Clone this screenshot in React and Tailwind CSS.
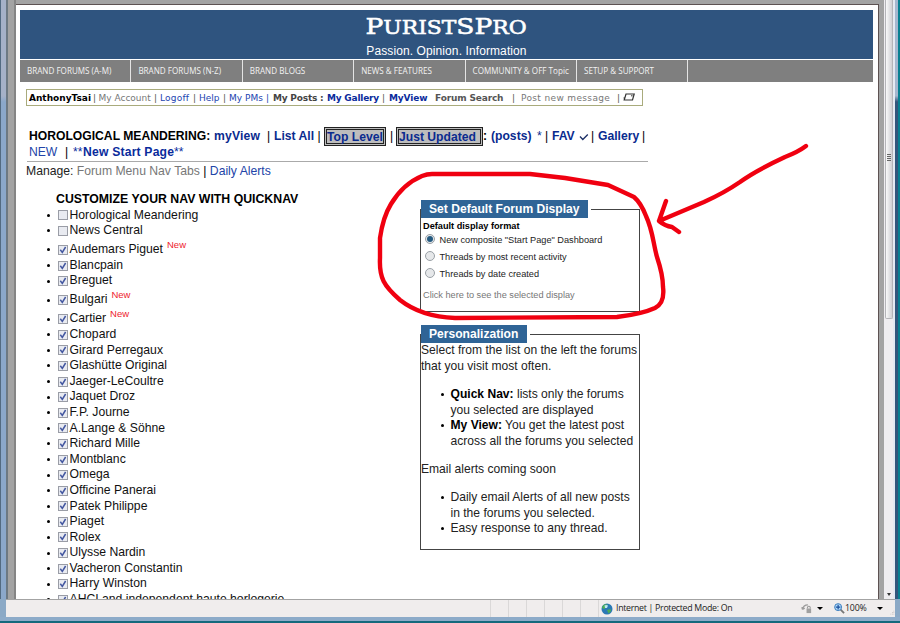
import React from "react";

const NAV = [
  "BRAND FORUMS (A-M)",
  "BRAND FORUMS (N-Z)",
  "BRAND BLOGS",
  "NEWS & FEATURES",
  "COMMUNITY & OFF Topic",
  "SETUP & SUPPORT",
];

const FORUMS = [
  { name: "Horological Meandering", off: true },
  { name: "News Central", off: true },
  { name: "Audemars Piguet", fresh: true },
  { name: "Blancpain" },
  { name: "Breguet" },
  { name: "Bulgari", fresh: true },
  { name: "Cartier", fresh: true },
  { name: "Chopard" },
  { name: "Girard Perregaux" },
  { name: "Glashütte Original" },
  { name: "Jaeger-LeCoultre" },
  { name: "Jaquet Droz" },
  { name: "F.P. Journe" },
  { name: "A.Lange & Söhne" },
  { name: "Richard Mille" },
  { name: "Montblanc" },
  { name: "Omega" },
  { name: "Officine Panerai" },
  { name: "Patek Philippe" },
  { name: "Piaget" },
  { name: "Rolex" },
  { name: "Ulysse Nardin" },
  { name: "Vacheron Constantin" },
  { name: "Harry Winston" },
  { name: "AHCI and independent haute horlogerie" },
];

function Seg({ className = "", children }) {
  return <span className={`block shrink-0 whitespace-nowrap ${className}`}>{children}</span>;
}

function Check({ on }) {
  return (
    <span className="flex h-[10px] w-[10px] shrink-0 items-center justify-center border border-[#9a9da6] bg-[#e9ebf1]">
      {on && (
        <svg viewBox="0 0 8 8" className="h-2 w-2">
          <path d="M1.3 3.8 L3.3 6.4 L6.6 1" fill="none" stroke="#4357a0" strokeWidth="1.5" />
        </svg>
      )}
    </span>
  );
}

function Radio({ on }) {
  return (
    <span className="flex h-[10px] w-[10px] shrink-0 items-center justify-center rounded-full border border-[#9aa0a6] bg-[#e6e8ea]">
      {on && <span className="h-[6px] w-[6px] rounded-full bg-[#245a80]" />}
    </span>
  );
}

function Bullets({ items }) {
  return (
    <ul className="pl-[20px]">
      {items.map((it, i) => (
        <li key={i} className="flex">
          <span className="mt-[6px] mr-[6.5px] h-[3px] w-[3px] shrink-0 rounded-full bg-black" />
          <div className="whitespace-nowrap">{it}</div>
        </li>
      ))}
    </ul>
  );
}

function Header() {
  return (
    <header className="w-[853px]">
      <div className="flex h-[49px] flex-col items-center bg-[#2f547f] text-white">
        <div className="mt-[3px] h-[27px] scale-x-[1.15] font-['DejaVu_Serif',serif] text-[23px] leading-[27px] whitespace-nowrap [-webkit-text-stroke:0.6px_white]">
          P<span className="text-[19px]">URIST</span>SP<span className="text-[19px]">RO</span>
        </div>
        <div className="mt-[4px] text-[12px] leading-[15px] tracking-[0.1px] whitespace-nowrap">Passion. Opinion. Information</div>
      </div>
      <nav className="mt-px flex h-[22px] bg-[#7f7f7f]">
        {NAV.map((n) => (
          <div
            key={n}
            className="w-[111.4px] shrink-0 border-r border-[#e4e4e4] pl-[7px] font-['Open_Sans',sans-serif] text-[8.1px] leading-[22px] whitespace-nowrap text-[#f2f2f2]"
          >
            {n}
          </div>
        ))}
      </nav>
    </header>
  );
}

function AccountBar() {
  return (
    <div className="mt-[7px] ml-[6px] flex h-[17px] w-[617px] border border-[#a9ab7c] pl-[2px] font-['DejaVu_Sans',sans-serif] text-[9px] leading-[17px] text-[#555]">
      <Seg className="w-[64px] font-bold text-black">AnthonyTsai</Seg>
      <Seg className="w-[5.5px]">|</Seg>
      <Seg className="w-[55.5px] text-[#777]">My Account</Seg>
      <Seg className="w-[6px]">|</Seg>
      <Seg className="w-[33px] tracking-[0.2px] text-[#2244b0]">Logoff</Seg>
      <Seg className="w-[6px]">|</Seg>
      <Seg className="w-[24px] text-[#2244b0]">Help</Seg>
      <Seg className="w-[6px]">|</Seg>
      <Seg className="w-[37px] text-[#2244b0]">My PMs</Seg>
      <Seg className="w-[7px] text-[#2244b0]">|</Seg>
      <Seg className="w-[54px] font-bold tracking-[-0.2px] text-[#444]">My Posts :</Seg>
      <Seg className="w-[55px] font-bold tracking-[-0.2px] text-[#0a2b9c]">My Gallery</Seg>
      <Seg className="w-[7px]">|</Seg>
      <Seg className="w-[46px] font-bold tracking-[-0.1px] text-[#0a2b9c]">MyView</Seg>
      <Seg className="w-[77px] font-bold tracking-[-0.15px] text-[#555]">Forum Search</Seg>
      <Seg className="w-[9px]">|</Seg>
      <Seg className="w-[96px] tracking-[0.35px] text-[#777]">Post new message</Seg>
      <Seg className="w-[6px]">|</Seg>
      <svg viewBox="0 0 12 9" className="mt-[3px] h-[9px] w-[12px] shrink-0">
        <path d="M3 1 H11.2 L9.5 7 H1.2 Z" fill="white" stroke="#333" strokeWidth="1.2" />
        <path d="M8 2.8 H9.6 M0.5 5 H2" stroke="#333" strokeWidth="1" />
      </svg>
    </div>
  );
}

function ForumBar() {
  return (
    <div className="ml-[7px] h-[34px] w-[621px] border-b border-[#aaa] pl-[2px] text-[12.15px] leading-[16px] text-black">
      <div className="flex h-[16px] font-bold text-[#0a2b8f]">
        <Seg className="w-[185px] text-black">HOROLOGICAL MEANDERING:</Seg>
        <Seg className="w-[53px]"><span className="tracking-[0.2px]">myView</span></Seg>
        <Seg className="w-[7px] font-normal text-black">|</Seg>
        <Seg className="w-[43.5px]">List All</Seg>
        <Seg className="w-[6.5px] font-normal text-black">|</Seg>
        <Seg className="-mt-[1.5px] h-[19px] w-[62px] border-[3px] border-double border-[#222] bg-[#bdbdbd] leading-[14px]">Top Level</Seg>
        <Seg className="w-[10px] pl-[4px] font-normal text-black">|</Seg>
        <Seg className="-mt-[1.5px] h-[19px] w-[87px] border-[3px] border-double border-[#222] bg-[#bdbdbd] leading-[14px]">Just Updated</Seg>
        <Seg className="w-[8px] text-black">:</Seg>
        <Seg className="w-[46px]">(posts)</Seg>
        <Seg className="w-[8px] font-normal">*</Seg>
        <Seg className="w-[7px] font-normal text-black">|</Seg>
        <Seg className="w-[27px]">FAV</Seg>
        <svg viewBox="0 0 12 16" className="h-4 w-[12px] shrink-0">
          <path d="M1 8.5 L3.8 11.5 L8.8 6.5" fill="none" stroke="#1b2f66" strokeWidth="1.3" />
        </svg>
        <Seg className="w-[7px] font-normal text-black">|</Seg>
        <Seg className="w-[44px]">Gallery</Seg>
        <Seg className="w-[4px] font-normal text-black">|</Seg>
      </div>
      <div className="flex h-[16px] text-[#0a2b9c]">
        <Seg className="w-[36px] text-[#2244a8]">NEW</Seg>
        <Seg className="w-[8px] text-black">|</Seg>
        <Seg className="w-[10px]">**</Seg>
        <Seg className="w-[91px] font-bold tracking-[0.2px]">New Start Page</Seg>
        <Seg>**</Seg>
      </div>
    </div>
  );
}

function QuickNav() {
  return (
    <section className="w-[393px] shrink-0 text-[12.2px] text-[#111]">
      <h2 className="h-[15.6px] pl-[29px] text-[12.3px] leading-[15.6px] font-bold whitespace-nowrap text-black">
        CUSTOMIZE YOUR NAV WITH QUICKNAV
      </h2>
      <ul className="pl-[19.5px]">
        {FORUMS.map((f) => (
          <li key={f.name} className={f.fresh ? "flex h-[19px] items-end" : "flex h-[15.6px] items-end"}>
            <div className="flex h-[15.6px] items-center leading-[15.6px] whitespace-nowrap">
              <span className="mr-[8px] h-[3px] w-[3px] rounded-full bg-black" />
              <Check on={!f.off} />
              <span className="ml-[2px]">{f.name}</span>
              {f.fresh && <span className="ml-[4px] h-[26px] text-[9.5px] text-[#ee1c2e]">New</span>}
            </div>
          </li>
        ))}
      </ul>
    </section>
  );
}

function Legend({ wide, children }) {
  return (
    <legend className="bg-white pr-[3px]">
      <div
        className={
          wide
            ? "h-[18px] w-[167px] bg-[#2f6496] pl-[8px] text-[12.1px] leading-[18px] font-bold whitespace-nowrap text-white"
            : "h-[18px] w-[106px] bg-[#2f6496] pl-[8px] text-[12.1px] leading-[18px] font-bold whitespace-nowrap text-white"
        }
      >
        {children}
      </div>
    </legend>
  );
}

function SidePanels() {
  return (
    <section className="mt-[8px] w-[220px] shrink-0">
      <fieldset className="h-[112px] w-[220px] border border-[#444] text-[9.2px] text-[#222]">
        <Legend wide>Set Default Forum Display</Legend>
        <div className="pl-[2px] whitespace-nowrap">
          <div className="mt-[2px] h-[12px] leading-[12px] font-bold text-black">Default display format</div>
          {['New composite "Start Page" Dashboard', "Threads by most recent activity", "Threads by date created"].map((t, i) => (
            <div key={t} className="flex h-[17px] pl-[2px] leading-[17px]">
              <span className="mt-[2px]"><Radio on={i === 0} /></span>
              <span className="ml-[4.5px]">{t}</span>
            </div>
          ))}
          <div className="mt-[5px] leading-[14px] text-[#777]">Click here to see the selected display</div>
        </div>
      </fieldset>
      <fieldset className="mt-[13px] h-[225px] w-[220px] min-w-0 border border-[#444] text-[12.08px] leading-[15.6px] text-[#222]">
        <Legend>Personalization</Legend>
        <p className="whitespace-nowrap">
          Select from the list on the left the forums
          <br />
          that you visit most often.
        </p>
        <div className="mt-[13px]">
          <Bullets
            items={[
              <>
                <b className="text-black">Quick Nav:</b> lists only the forums
                <br />
                you selected are displayed
              </>,
              <>
                <b className="text-black">My View:</b> You get the latest post
                <br />
                across all the forums you selected
              </>,
            ]}
          />
        </div>
        <p className="mt-[12.5px]">Email alerts coming soon</p>
        <div className="mt-[12.5px]">
          <Bullets
            items={[
              <>
                Daily email Alerts of all new posts
                <br />
                in the forums you selected.
              </>,
              "Easy response to any thread.",
            ]}
          />
        </div>
      </fieldset>
    </section>
  );
}

function ScrollBar() {
  return (
    <div className="flex w-[9px] shrink-0 flex-col items-center bg-[#efedf0]">
      <div className="flex h-[319px] w-[8px] flex-col items-center rounded-b-[2px] border-x border-b border-[#b4b4b8] bg-gradient-to-r from-[#fafafa] to-[#cfcfd3] pt-[154px]">
        <div className="h-px w-[4px] bg-[#666]" />
        <div className="mt-px h-px w-[4px] bg-[#666]" />
        <div className="mt-px h-px w-[4px] bg-[#666]" />
        <div className="mt-px h-px w-[4px] bg-[#666]" />
      </div>
      <div className="mt-auto mb-[3px] border-x-[2.5px] border-t-[3px] border-x-transparent border-t-[#333]" />
    </div>
  );
}

function StatusBar() {
  return (
    <footer className="ml-[6px] flex h-[18px] w-[889px] items-center border-t border-[#a3a3a3] bg-[#f0eded] font-['Open_Sans',sans-serif] text-[8.8px] text-[#1c1c1c]">
      <div className="ml-[484px] flex h-full">
        {[0, 1, 2, 3, 4].map((i) => (
          <span key={i} className="w-[18px] border-l border-[#dad8d8]" />
        ))}
        <span className="w-[19px] border-x border-[#dad8d8]" />
      </div>
      <svg viewBox="0 0 12 12" className="ml-[2px] h-[12px] w-[12px] shrink-0">
        <circle cx="6" cy="6" r="5.5" fill="#2b79b5" />
        <path d="M2 2.5 Q5 0.5 6.5 2 L5 5 L2.5 6 L1 4.5Z M6 7 L9.5 6 L10 8 L7.5 10.5Z" fill="#4cae55" />
        <path d="M3.5 2.5 Q5 1.5 7 2.5 L6 5 L4 5Z" fill="#bfe6ef" />
      </svg>
      <Seg className="ml-[3px] w-[178px] tracking-[-0.3px]">Internet | Protected Mode: On</Seg>
      <svg viewBox="0 0 12 12" className="ml-[7px] h-[11px] w-[12px] shrink-0">
        <path d="M1 7 Q2 2 7 2 M1 7 L0.5 4.5 M1 7 L3.5 5.5" fill="none" stroke="#9b9b9b" strokeWidth="1.5" />
        <rect x="5.5" y="6" width="5" height="5" fill="#a0a0a0" />
        <path d="M6.5 6 V4.5 Q8 2.8 9.5 4.5 V6" fill="none" stroke="#999" strokeWidth="1.1" />
      </svg>
      <span className="ml-[4px] border-x-[3px] border-t-[3px] border-x-transparent border-t-black" />
      <svg viewBox="0 0 12 12" className="ml-[11px] h-[11px] w-[11px] shrink-0">
        <path d="M7 7 L11 11" stroke="#777" strokeWidth="2" />
        <circle cx="4.5" cy="4.5" r="3.8" fill="#b6dcfa" stroke="#2f75b9" strokeWidth="1" />
        <path d="M4.5 2 V7 M2 4.5 H7" stroke="#164d9d" strokeWidth="1.3" />
      </svg>
      <Seg className="w-[32px] tracking-[-0.2px]">100%</Seg>
      <span className="border-x-[3px] border-t-[3px] border-x-transparent border-t-black" />
      <svg viewBox="0 0 8 8" className="ml-[6px] h-2 w-2 self-end">
        <path d="M6 1h1v1H6zM4 3h1v1H4zM6 3h1v1H6zM2 5h1v1H2zM4 5h1v1H4zM6 5h1v1H6z" fill="#b8b4b4" />
      </svg>
    </footer>
  );
}

function Annotation() {
  return (
    <svg viewBox="0 0 900 623" className="pointer-events-none absolute inset-0 h-[623px] w-[900px]">
      <g fill="none" stroke="#f00010" strokeWidth="4.4" strokeLinecap="round" strokeLinejoin="round">
        <path d="M432 174 L530 174 L565 178 L608 185 L634 197 Q641 203 646 216 C653 231 653 243 657 257 Q663 275 663 287 Q665 303 655 308 Q642 314 617 317 L455 318 C431 317 414 311 400 300 C384 286 379 278 380 258 L380 238 Q383 217 391 204 Q403 184 422 176 Q427 174 432 174" />
        <path d="M806 146 Q798 152 785 157 Q755 171 740 182 Q724 193 704 202 L659 221 M666 201 L659 221 Q665 226 672 227 L679 232" />
      </g>
    </svg>
  );
}

export default function App() {
  return (
    <div className="relative flex h-[623px] w-[900px] flex-col overflow-hidden bg-[#8ba9c6] font-['Liberation_Sans',Arial,sans-serif]">
      <div className="flex h-[599px] w-[900px]">
        <div className="flex w-[16px] shrink-0">
          <div className="w-px bg-[#536b82]" />
          <div className="w-[5px] bg-gradient-to-b from-[#a5b1c8] from-16% to-[#8ba8cb] to-17%" />
          <div className="w-[2px] bg-[#6d7983]" />
          <div className="w-[6px] bg-[#a3a3a3]" />
          <div className="w-[2px] bg-[#858585]" />
        </div>
        <div className="flex w-[868px] shrink-0 flex-col bg-[#a3a3a3] pt-[4px] pr-[5px]">
          <main className="flex flex-1 flex-col overflow-hidden border-t border-r border-[#5d5252] bg-white pt-[5px] pl-[4px]">
            <Header />
            <AccountBar />
            <div className="h-[22px] shrink-0" />
            <ForumBar />
            <div className="ml-[6px] h-[20px] shrink-0 text-[12.2px] leading-[18px] whitespace-nowrap text-[#777]">
              <span className="text-[#222]">Manage:</span> Forum Menu Nav Tabs <span className="text-black">|</span>{" "}
              <span className="text-[#2244a8]">Daily Alerts</span>
            </div>
            <div className="mt-[10px] ml-[7px] flex h-0 flex-1 items-start">
              <QuickNav />
              <SidePanels />
            </div>
          </main>
        </div>
        <ScrollBar />
        <div className="flex w-[7px] shrink-0">
          <div className="w-[2px] bg-[#e4eaf2]" />
          <div className="w-[3px] bg-gradient-to-b from-[#a5b7cf] from-16% to-[#33567c] to-17%" />
          <div className="w-[2px] bg-[#087f91]" />
        </div>
      </div>
      <StatusBar />
      <div className="h-[4px] bg-[#8dabc9]" />
      <div className="h-[2px] bg-[#14697d]" />
      <Annotation />
    </div>
  );
}
